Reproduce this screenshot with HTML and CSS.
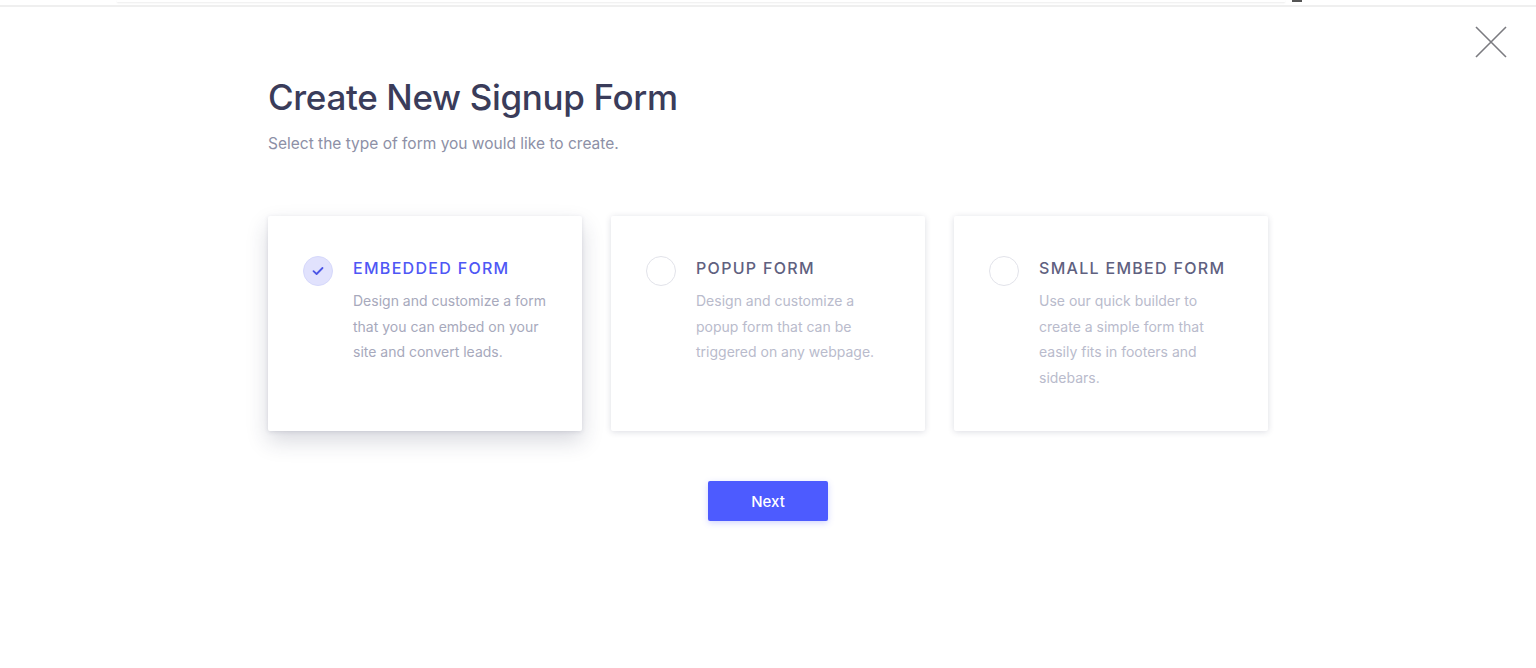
FILE: index.html
```html
<!DOCTYPE html>
<html lang="en">
<head>
<meta charset="utf-8">
<title>Create New Signup Form</title>
<link rel="stylesheet" href="styles.css">
</head>
<body>
<div class="topbar"><div class="topbar-inner"></div><div class="topbar-dot"></div></div>
<button class="close" aria-label="Close">
  <svg width="32" height="32" viewBox="0 0 32 32"><path d="M1 1 L31 31 M31 1 L1 31" stroke="#7b7b80" stroke-width="1.6" fill="none"/></svg>
</button>
<main class="wrap">
  <h1 class="title">Create New Signup Form</h1>
  <p class="subtitle">Select the type of form you would like to create.</p>
  <div class="cards">
    <div class="card selected">
      <div class="radio checked">
        <svg width="12" height="10" viewBox="0 0 12 10"><path d="M1.5 5.2 L4.6 8 L10.5 2" stroke="#4b55e6" stroke-width="1.8" fill="none" stroke-linecap="round" stroke-linejoin="round"/></svg>
      </div>
      <div class="card-body">
        <h2 class="card-title">EMBEDDED FORM</h2>
        <p class="card-desc">Design and customize a form that you can embed on your site and convert leads.</p>
      </div>
    </div>
    <div class="card">
      <div class="radio"></div>
      <div class="card-body">
        <h2 class="card-title">POPUP FORM</h2>
        <p class="card-desc">Design and customize a popup form that can be triggered on any webpage.</p>
      </div>
    </div>
    <div class="card">
      <div class="radio"></div>
      <div class="card-body">
        <h2 class="card-title">SMALL EMBED FORM</h2>
        <p class="card-desc">Use our quick builder to create a simple form that easily fits in footers and sidebars.</p>
      </div>
    </div>
  </div>
  <div class="actions"><button class="next">Next</button></div>
</main>
</body>
</html>
```
FILE: styles.css
```css
* { box-sizing: border-box; }
html, body { margin: 0; padding: 0; background: #ffffff; }
body {
  font-family: Inter, "Noto Sans", "Liberation Sans", sans-serif;
  color: #3a3c5a;
  position: relative;
  min-height: 668px;
}
.topbar {
  height: 7px;
  border-bottom: 2px solid #efefef;
  position: relative;
}
.topbar-inner {
  margin-left: 117px;
  width: 1168px;
  height: 2px;
  box-shadow: 0 1px 2px rgba(0,0,0,0.08);
}
.topbar-dot {
  position: absolute;
  left: 1292px;
  top: 0;
  width: 10px;
  height: 2px;
  background: #555;
}
.close {
  position: absolute;
  top: 26px;
  right: 29px;
  width: 32px;
  height: 32px;
  padding: 0;
  border: 0;
  background: none;
  cursor: pointer;
}
.close svg { display: block; }
.wrap {
  width: 1000px;
  margin: 0 auto;
  padding-top: 68px;
}
.title {
  margin: 0;
  font-size: 35px;
  font-weight: 500;
  line-height: 44px;
  letter-spacing: -0.35px;
  color: #3a3c5a;
}
.subtitle {
  margin: 14px 0 0;
  font-size: 15.5px;
  line-height: 22px;
  color: #8d90a6;
}
.cards {
  display: grid;
  grid-template-columns: repeat(3, 1fr);
  gap: 29px;
  margin-top: 61px;
}
.card {
  display: flex;
  gap: 20px;
  height: 215px;
  padding: 40px 20px 0 35px;
  background: #fff;
  border-radius: 2px;
  box-shadow: 0 1px 6px rgba(40, 44, 80, 0.16);
}
.card.selected {
  box-shadow: 0 10px 22px rgba(40, 44, 80, 0.18), 0 1px 4px rgba(40,44,80,0.12);
}
.radio {
  flex: none;
  width: 30px;
  height: 30px;
  border-radius: 50%;
  border: 1px solid #e2e3ea;
  display: flex;
  align-items: center;
  justify-content: center;
}
.radio.checked {
  background: #e1e2fd;
  border-color: #d6d8fb;
}
.card-body { padding-top: 2px; }
.card-title {
  margin: 0;
  font-size: 16px;
  font-weight: 500;
  letter-spacing: 1.3px;
  line-height: 20px;
  color: #5f6180;
}
.selected .card-title { color: #4e57f5; }
.card-desc {
  margin: 10px 0 0;
  max-width: 196px;
  font-size: 14px;
  line-height: 25.5px;
  color: #b9bbcc;
}
.selected .card-desc { color: #a7a9bc; }
.actions {
  display: flex;
  justify-content: center;
  margin-top: 50px;
}
.next {
  width: 120px;
  height: 40px;
  border: 0;
  border-radius: 2px;
  background: #4d5bff;
  color: #fff;
  font-family: inherit;
  font-size: 15px;
  font-weight: 500;
  box-shadow: 0 2px 6px rgba(77, 91, 255, 0.25);
  cursor: pointer;
}
```
